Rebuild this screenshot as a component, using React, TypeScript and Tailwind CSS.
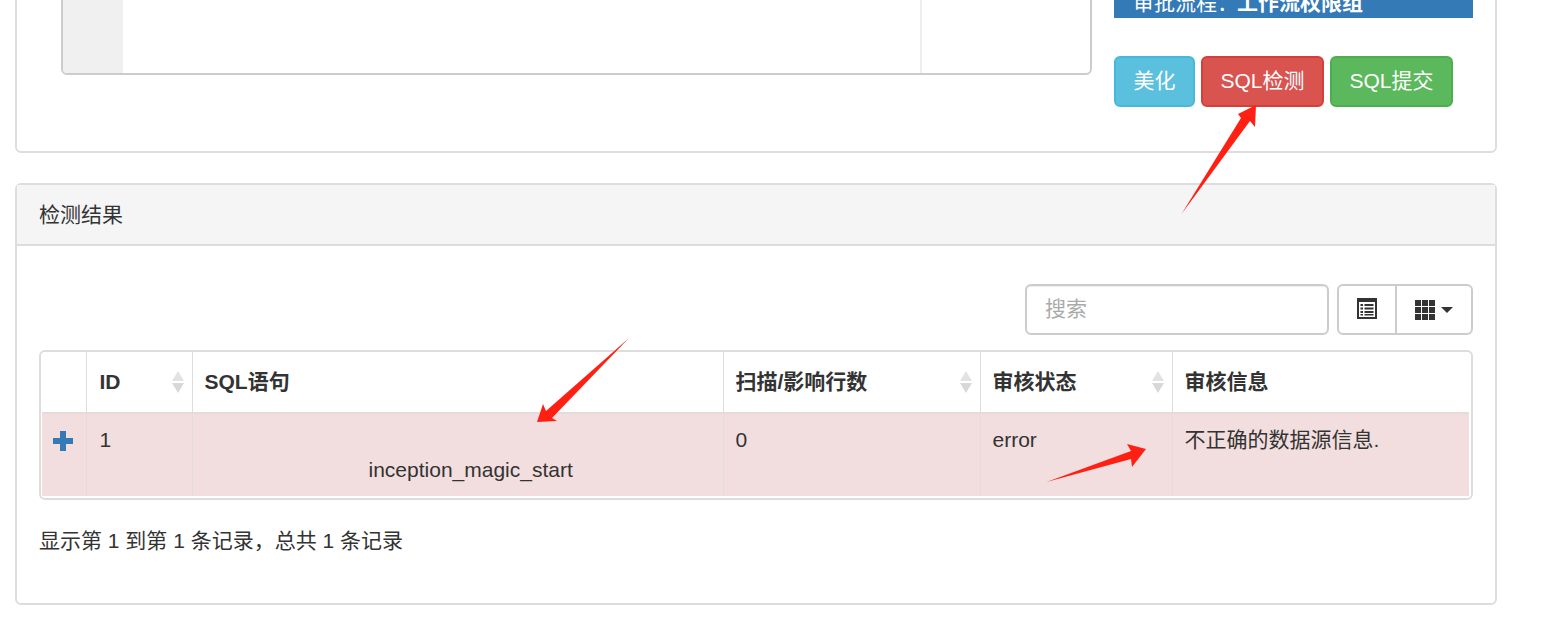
import { Fragment } from "react";

const font = "font-['Liberation_Sans','Noto_Sans_CJK_SC',sans-serif]";

function SortIcon() {
  return (
    <svg width="14" height="24" viewBox="0 0 14 24" className="shrink-0">
      <path d="M7 1 L13 11 L1 11 Z" fill="#e2e2e2" />
      <path d="M7 23 L13 13 L1 13 Z" fill="#d8d8d8" />
    </svg>
  );
}

function ListIcon() {
  return (
    <svg width="20" height="21" viewBox="0 0 20 21">
      <path fillRule="evenodd" fill="#333" d="M0 0H20V21H0Z M2 4V19H18V4Z" />
      <path fill="#333" d="M3.5 6H6V8H3.5Z M7.5 6H16.5V8H7.5Z M3.5 9.5H6V11.5H3.5Z M7.5 9.5H16.5V11.5H7.5Z M3.5 13H6V15H3.5Z M7.5 13H16.5V15H7.5Z M3.5 16H6V17.5H3.5Z M7.5 16H16.5V17.5H7.5Z" />
    </svg>
  );
}

function GridIcon() {
  return (
    <svg width="20" height="20" viewBox="0 0 20 20" fill="#333">
      {[0, 7, 14].map((y) => (
        <Fragment key={y}>
          <rect x="0" y={y} width="6" height="6" />
          <rect x="7" y={y} width="6" height="6" />
          <rect x="14" y={y} width="6" height="6" />
        </Fragment>
      ))}
    </svg>
  );
}

function Caret() {
  return (
    <svg width="12" height="6" viewBox="0 0 12 6">
      <path d="M0 0H12L6 6Z" fill="#333" />
    </svg>
  );
}

function PlusIcon() {
  return (
    <svg width="20" height="20" viewBox="0 0 20 20">
      <path d="M7 0H13V7H20V13H13V20H7V13H0V7H7Z" fill="#337ab7" />
    </svg>
  );
}

const headers = [
  { label: "", sort: false, pad: "pl-[13px]" },
  { label: "ID", sort: true, pad: "pl-[13px]" },
  { label: "SQL语句", sort: false, pad: "pl-[12px]" },
  { label: "扫描/影响行数", sort: true, pad: "pl-[12px]" },
  { label: "审核状态", sort: true, pad: "pl-[12px]" },
  { label: "审核信息", sort: false, pad: "pl-[12px]" },
];

export default function App() {
  return (
    <div className={`relative h-[623px] w-[1543px] overflow-hidden bg-white text-[21px] leading-[30px] text-[#333] ${font}`}>
      <div className="ml-[15px] w-[1482px]">
        {/* Editor panel */}
        <div className="mt-[-100px] h-[253px] rounded-md border-2 border-[#ddd] bg-white">
          <div className="flex items-start pl-[44px]">
            <div className="flex h-[173px] w-[1031px] overflow-hidden rounded-md border-2 border-[#ccc]">
              <div className="w-[60px] bg-[#f0f0f0]" />
              <div className="w-[799px] border-r-2 border-[#eee]" />
            </div>
            <div className="ml-[22px] w-[359px]">
              <div className="flex h-[116px] items-end bg-[#337ab7] pl-[19px] text-white">
                <div className="whitespace-nowrap">
                  审批流程：<b className="ml-[-1px]">工作流权限组</b>
                </div>
              </div>
              <div className="mt-[38px] flex gap-[6px] text-white">
                <button className="h-[51px] w-[81px] rounded-md border-2 border-[#46b8da] bg-[#5bc0de] pb-[2px]">美化</button>
                <button className="h-[51px] w-[123px] rounded-md border-2 border-[#d43f3a] bg-[#d9534f] pb-[2px]">SQL检测</button>
                <button className="h-[51px] w-[123px] rounded-md border-2 border-[#4cae4c] bg-[#5cb85c] pb-[2px]">SQL提交</button>
              </div>
            </div>
          </div>
        </div>

        {/* Result panel */}
        <div className="mt-[30px] h-[422px] rounded-md border-2 border-[#ddd] bg-white">
          <div className="flex h-[61px] items-center border-b-2 border-[#ddd] bg-[#f5f5f5] pl-[22px]">检测结果</div>
          <div className="px-[22px] pt-[38px]">
            <div className="flex justify-end gap-[8px]">
              <input
                placeholder="搜索"
                className="h-[51px] w-[304px] rounded-md border-2 border-[#ccc] pb-[2px] pl-[18px] shadow-[inset_0_1px_1px_rgba(0,0,0,0.075)] outline-none placeholder:text-[#aaa]"
              />
              <div className="flex h-[51px] w-[136px] rounded-md border-2 border-[#ccc]">
                <div className="flex w-[58px] items-center justify-center border-r-2 border-[#ccc] pb-[2px]">
                  <ListIcon />
                </div>
                <div className="flex flex-1 items-center gap-[6px] pl-[18px]">
                  <GridIcon />
                  <Caret />
                </div>
              </div>
            </div>

            <div className="mt-[15px] h-[150px] rounded-md border-2 border-[#ddd] pb-[2px] pl-[1px] pr-[2px]">
              <table className="w-[1427px] table-fixed border-collapse">
                <colgroup>
                  <col className="w-[44px]" />
                  <col className="w-[106px]" />
                  <col className="w-[531px]" />
                  <col className="w-[257px]" />
                  <col className="w-[192px]" />
                  <col className="w-[297px]" />
                </colgroup>
                <thead>
                  <tr className="h-[61px] border-b-2 border-[#e4dcdc]">
                    {headers.map((h, i) => (
                      <th key={i} className={`p-0 text-left ${i > 0 ? "border-l border-[#ddd]" : ""}`}>
                        <div className={`flex items-center justify-between pr-[7px] font-bold ${h.pad}`}>
                          <span>{h.label}</span>
                          {h.sort && <SortIcon />}
                        </div>
                      </th>
                    ))}
                  </tr>
                </thead>
                <tbody>
                  <tr className="h-[83px] bg-[#f2dede] align-top">
                    <td className="pr-[2px] pt-[17px]">
                      <div className="flex justify-center">
                        <PlusIcon />
                      </div>
                    </td>
                    <td className="border-l border-[#e2dcdc] pl-[13px] pt-[11px]">1</td>
                    <td className="border-l border-[#e2dcdc] pl-[176px] pt-[41px]">inception_magic_start</td>
                    <td className="border-l border-[#e2dcdc] pl-[12px] pt-[11px]">0</td>
                    <td className="border-l border-[#e2dcdc] pl-[12px] pt-[11px]">error</td>
                    <td className="border-l border-[#e2dcdc] pl-[12px] pt-[11px]">不正确的数据源信息.</td>
                  </tr>
                </tbody>
              </table>
            </div>

            <div className="mt-[26px]">显示第 1 到第 1 条记录，总共 1 条记录</div>
          </div>
        </div>
      </div>

      {/* Red annotation arrows */}
      <svg className="pointer-events-none absolute inset-0" width="1543" height="623" viewBox="0 0 1543 623">
        <path d="M1181.5 214 L1241 118 L1238 114 L1256 105 L1255 127 L1250 121 Z" fill="#ff2013" />
        <path d="M629 338 L552 418 L557 421 L537 422 L543 404 L546 411 Z" fill="#ff2013" />
        <path d="M1046.5 482 L1131 451 L1127 444 L1146 449 L1132 467 L1131 459 Z" fill="#ff2013" />
      </svg>
    </div>
  );
}
